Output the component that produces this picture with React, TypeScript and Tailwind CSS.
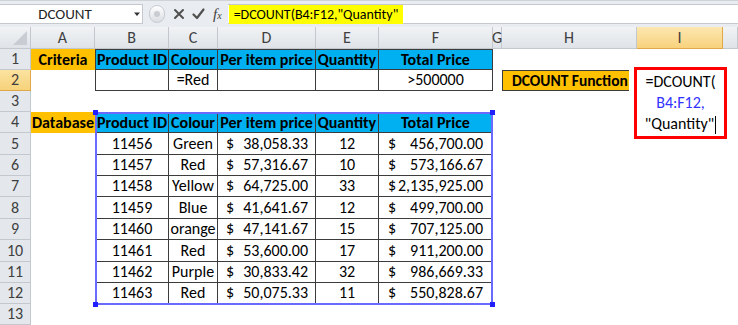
import React from 'react';

const FONT = "font-['Carlito','Calibri','Liberation_Sans_Narrow','Liberation_Sans',sans-serif]";

type Row = { id: string; colour: string; price: string; qty: string; total: string };

const rows: Row[] = [
  { id: '11456', colour: 'Green', price: '38,058.33', qty: '12', total: '456,700.00' },
  { id: '11457', colour: 'Red', price: '57,316.67', qty: '10', total: '573,166.67' },
  { id: '11458', colour: 'Yellow', price: '64,725.00', qty: '33', total: '2,135,925.00' },
  { id: '11459', colour: 'Blue', price: '41,641.67', qty: '12', total: '499,700.00' },
  { id: '11460', colour: 'orange', price: '47,141.67', qty: '15', total: '707,125.00' },
  { id: '11461', colour: 'Red', price: '53,600.00', qty: '17', total: '911,200.00' },
  { id: '11462', colour: 'Purple', price: '30,833.42', qty: '32', total: '986,669.33' },
  { id: '11463', colour: 'Red', price: '50,075.33', qty: '11', total: '550,828.67' },
];

const letters = ['A', 'B', 'C', 'D', 'E', 'F', 'G', 'H', 'I'];
const headers = ['Product ID', 'Colour', 'Per item price', 'Quantity', 'Total Price'];

const colHead = 'flex items-center justify-center bg-gradient-to-b from-[#f1f3f5] to-[#dfe3e8] border-r border-b border-[#c3c8cf] text-[#3f3f3f]';
const rowHead = 'flex items-center justify-center bg-[#e4e7ec] border-b border-r border-[#c3c8cf] text-[#3f3f3f]';
const box = 'border-r border-b border-[#3c3c3c]';

const RowHeader: React.FC<{ n: number; active?: boolean }> = ({ n, active }) => (
  <div className={active ? 'flex items-center justify-center bg-gradient-to-b from-[#fbe3a0] to-[#f6d27a] border-b border-r border-[#e0a848] text-[#3f3f3f]' : rowHead}>
    {n}
  </div>
);

const Blank: React.FC<{ count?: number }> = ({ count = 1 }) => (
  <>
    {Array.from({ length: count }).map((_, i) => (
      <div key={i} />
    ))}
  </>
);

const HeaderCells: React.FC = () => (
  <>
    {headers.map((h, i) => (
      <div
        key={h}
        className={`${box} border-t flex items-center justify-center bg-[#00b0f0] font-bold ${i === 0 ? 'border-l' : ''}`}
      >
        {h}
      </div>
    ))}
  </>
);

export default function App() {
  return (
    <div className={`w-[738px] h-[325px] overflow-hidden bg-white text-[16px] leading-none text-black ${FONT}`}>
      {/* formula bar */}
      <div className="h-[27px] bg-[#e9ecf0] border-t border-[#cfd3d8] flex items-center">
        <div className="w-[143px] h-[20px] bg-white border border-[#c5c9ce] border-l-0 flex items-center">
          <span className="w-[130px] text-center text-[15px] text-[#222]">DCOUNT</span>
          <svg width="8" height="6" viewBox="0 0 8 6" className="ml-[3px]">
            <path d="M1 1.5 L7 1.5 L4 5 Z" fill="#333" />
          </svg>
        </div>
        <div className="ml-[6px] w-[16px] h-[18px] rounded-full bg-gradient-to-b from-white to-[#dadde2] border border-[#c8ccd2] flex items-center justify-center">
          <div className="w-[6px] h-[6px] rounded-full bg-[#c9ccd1]" />
        </div>
        <svg width="12" height="12" viewBox="0 0 12 12" className="ml-[8px]">
          <path d="M2 2 L10 10 M10 2 L2 10" stroke="#505050" strokeWidth="2" strokeLinecap="round" />
        </svg>
        <svg width="13" height="12" viewBox="0 0 13 12" className="ml-[7px]">
          <path d="M1.5 6.5 L5 10 L11.5 1.5" stroke="#505050" strokeWidth="2.2" fill="none" strokeLinecap="round" strokeLinejoin="round" />
        </svg>
        <span className="ml-[8px] italic text-[#404040] font-['Liberation_Serif',serif] text-[15px]">
          f<span className="text-[10px]">x</span>
        </span>
        <div className="ml-[6px] flex-1 h-[20px] bg-white border-y border-[#c5c9ce] flex items-center">
          <span className="ml-[1px] h-[19px] bg-[#ffff00] px-[5px] text-[14px] leading-[19px]">=DCOUNT(B4:F12,"Quantity"</span>
        </div>
      </div>

      {/* sheet */}
      <div className="relative">
        <div className="grid grid-cols-[31px_64px_74px_49px_98px_63px_114px_9px_135px_86px_15px] grid-rows-[22px_21px_21px_21px_21px_22px_21px_21px_22px_21px_22px_21px_21px_21px]">
          {/* column headers */}
          <div className={`${colHead} relative`}>
            <svg width="14" height="14" viewBox="0 0 14 14" className="absolute right-[3px] bottom-[3px]">
              <path d="M14 0 L14 14 L0 14 Z" fill="#c9cdd3" />
            </svg>
          </div>
          {letters.map((l) => (
            <div
              key={l}
              className={
                l === 'I'
                  ? 'flex items-center justify-center bg-gradient-to-b from-[#fce7b0] to-[#f8d27c] border-r border-b border-[#e0a848] text-[#3f3f3f]'
                  : colHead
              }
            >
              {l}
            </div>
          ))}
          <div className={colHead} />

          {/* row 1 */}
          <RowHeader n={1} />
          <div className="flex items-center justify-center bg-[#ffc000] font-bold">Criteria</div>
          <HeaderCells />
          <Blank count={4} />

          {/* row 2 */}
          <RowHeader n={2} active />
          <div />
          <div className={`${box} border-l`} />
          <div className={`${box} flex items-center justify-center`}>=Red</div>
          <div className={box} />
          <div className={box} />
          <div className={`${box} flex items-center justify-center`}>&gt;500000</div>
          <div />
          <div className="border border-[#3c3c3c] bg-[#ffc000] font-bold text-[15.5px] flex items-center pl-[9px]">DCOUNT Function</div>
          <Blank count={2} />

          {/* row 3 */}
          <RowHeader n={3} />
          <Blank count={10} />

          {/* row 4 */}
          <RowHeader n={4} />
          <div className="flex items-center justify-center bg-[#ffc000] font-bold">Database</div>
          <HeaderCells />
          <Blank count={4} />

          {/* data rows */}
          {rows.map((r, i) => (
            <React.Fragment key={r.id}>
              <RowHeader n={i + 5} />
              <div />
              <div className={`${box} border-l flex items-center justify-center`}>{r.id}</div>
              <div className={`${box} flex items-center justify-center`}>{r.colour}</div>
              <div className={`${box} flex items-center justify-between pl-[8px] pr-[7px]`}>
                <span>$</span>
                <span>{r.price}</span>
              </div>
              <div className={`${box} flex items-center justify-center`}>{r.qty}</div>
              <div className={`${box} flex items-center justify-between pl-[9px] pr-[9px]`}>
                <span>$</span>
                <span>{r.total}</span>
              </div>
              <Blank count={4} />
            </React.Fragment>
          ))}

          {/* row 13 */}
          <RowHeader n={13} />
          <Blank count={10} />
        </div>

        {/* range highlight B4:F12 */}
        <div className="absolute left-[95px] top-[85px] w-[398px] h-[193px] border-2 border-[#6a6aff] pointer-events-none">
          <div className="absolute -left-[4px] -top-[4px] w-[5px] h-[5px] bg-[#2020ff]" />
          <div className="absolute -right-[4px] -top-[4px] w-[5px] h-[5px] bg-[#2020ff]" />
          <div className="absolute -left-[4px] -bottom-[4px] w-[5px] h-[5px] bg-[#2020ff]" />
          <div className="absolute -right-[4px] -bottom-[4px] w-[5px] h-[5px] bg-[#2020ff]" />
        </div>

        {/* editing cell I2, outlined in red */}
        <div className="absolute left-[629px] top-[36px] w-[103px] h-[80px] bg-white flex items-center justify-center">
          <div className="w-[93px] h-[72px] border-[3px] border-[#ff0000] bg-white flex flex-col items-center leading-[21px] pt-[1px]">
            <span>=DCOUNT(</span>
            <span className="text-[#3333ff]">B4:F12,</span>
            <span>
              "Quantity"<span className="inline-block w-px h-[18px] bg-black align-middle ml-[1px]" />
            </span>
          </div>
        </div>
      </div>
    </div>
  );
}
